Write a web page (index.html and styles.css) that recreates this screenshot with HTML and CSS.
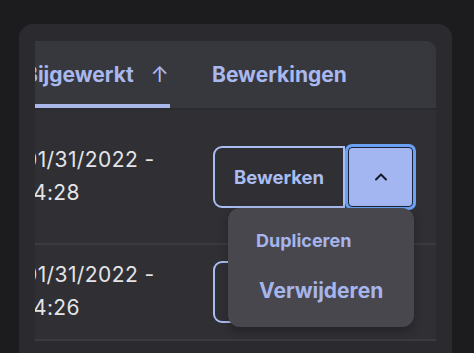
FILE: index.html
```html
<!DOCTYPE html>
<html>
<head>
<meta charset="utf-8">
<link rel="stylesheet" href="styles.css">
</head>
<body>
<div class="page">
  <div class="card">
    <div class="viewport">
      <div class="table">
        <div class="head">
          <div class="th th-date">Bijgewerkt <span class="arrow">↑</span></div>
          <div class="th th-actions">Bewerkingen</div>
        </div>
        <div class="row row-first">
          <div class="cell-date">01/31/2022 -<br>14:28</div>
          <div class="cell-actions">
            <div class="btn-group">
              <button class="btn-edit">Bewerken</button>
              <button class="btn-toggle"><svg width="14" height="9" viewBox="0 0 14 9"><path d="M2 7.5 L7 2.5 L12 7.5" fill="none" stroke="#141a2a" stroke-width="2" stroke-linecap="round" stroke-linejoin="round"/></svg></button>
            </div>
          </div>
        </div>
        <div class="row row-second">
          <div class="cell-date">01/31/2022 -<br>14:26</div>
          <div class="cell-actions">
            <div class="btn-group">
              <button class="btn-edit">Bewerken</button>
              <button class="btn-toggle plain"><svg width="14" height="9" viewBox="0 0 14 9"><path d="M2 1.5 L7 6.5 L12 1.5" fill="none" stroke="#a9bdf0" stroke-width="2" stroke-linecap="round" stroke-linejoin="round"/></svg></button>
            </div>
          </div>
        </div>
      </div>
    </div>
    <div class="menu">
      <div class="menu-item small">Dupliceren</div>
      <div class="menu-item large">Verwijderen</div>
    </div>
  </div>
</div>
</body>
</html>
```
FILE: styles.css
```css
html, body {
  margin: 0;
  padding: 0;
  background: #1c1c1f;
  font-family: Inter, "Noto Sans", sans-serif;
}
.page {
  width: 474px;
  height: 353px;
  overflow: hidden;
  padding-top: 24px;
  padding-left: 19px;
  box-sizing: border-box;
}
.card {
  position: relative;
  width: 433px;
  height: 360px;
  background: #2b2b2f;
  border-radius: 14px;
  padding: 17px 16px 0 16px;
  box-sizing: border-box;
}
.viewport {
  width: 401px;
  overflow: hidden;
  border-top-right-radius: 10px;
}
.table {
  margin-left: -11px;
  width: 412px;
}
.head {
  display: flex;
  height: 67px;
  background: #37383e;
  color: #a9b8ee;
  font-weight: 700;
  font-size: 21px;
  align-items: stretch;
}
.th {
  display: flex;
  align-items: center;
  box-sizing: border-box;
}
.th-date {
  width: 146px;
  padding-left: 0;
  border-bottom: 4px solid #a9b7ea;
  padding-top: 3px;
}
.arrow {
  margin-left: 17px;
  font-weight: 400;
  font-size: 22px;
}
.th-actions {
  padding-left: 42px;
}
.row {
  display: flex;
  align-items: center;
  background: #2f2f34;
  border-bottom: 2px solid #3a3a40;
}
.row-first {
  height: 133px;
  margin-top: 2px;
}
.row-second {
  height: 94px;
}
.cell-date {
  width: 189px;
  color: #e4e4e8;
  font-size: 21px;
  letter-spacing: 0.4px;
  line-height: 33px;
  padding-bottom: 2px;
}
.btn-group {
  display: flex;
  align-items: center;
}
.btn-edit {
  width: 132px;
  height: 62px;
  border: 2px solid #a9bdf0;
  border-radius: 9px 0 0 9px;
  background: transparent;
  color: #a9bdf0;
  font-family: Inter, "Noto Sans", sans-serif;
  font-weight: 700;
  font-size: 18.5px;
  padding: 0;
}
.btn-toggle {
  width: 65px;
  height: 60px;
  margin-left: 3px;
  background: #a3b6f2;
  border: 1.5px solid #1b2336;
  border-radius: 4px;
  box-shadow: 0 0 0 3px #6aa1f4;
  display: flex;
  align-items: center;
  justify-content: center;
  padding: 0;
}
.btn-toggle.plain {
  background: transparent;
  border: 2px solid #a9bdf0;
  box-shadow: none;
  border-left: none;
  border-radius: 0 9px 9px 0;
  height: 62px;
  margin-left: 0;
}
.menu {
  position: absolute;
  left: 209px;
  top: 184px;
  width: 186px;
  height: 119px;
  background: #48474d;
  border-radius: 12px;
  box-shadow: 0 4px 10px rgba(0,0,0,0.25);
  color: #a6b5ec;
  font-weight: 700;
}
.menu-item.small {
  font-size: 18px;
  padding: 23px 0 0 28px;
  height: 20px;
  line-height: 20px;
}
.menu-item.large {
  font-size: 21px;
  padding: 28px 0 0 31px;
  line-height: 24px;
}
```
